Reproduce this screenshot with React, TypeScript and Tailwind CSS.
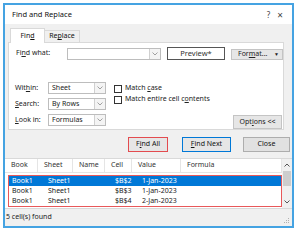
import React from "react";

const F = { fontFamily: '"Noto Sans", "Open Sans", Arial, sans-serif' };

function U({ children }: { children: React.ReactNode }) {
  return <span className="underline underline-offset-[1px] decoration-[0.5px]">{children}</span>;
}

function Arrow() {
  return (
    <svg width="6" height="4" viewBox="0 0 6 4">
      <path d="M0.5 0.5 L3 3 L5.5 0.5" fill="none" stroke="#8a8a8a" strokeWidth="0.8" />
    </svg>
  );
}

function Chevron({ up }: { up?: boolean }) {
  return (
    <svg width="6" height="4" viewBox="0 0 6 4">
      <path d={up ? "M0.5 3.5 L3 1 L5.5 3.5" : "M0.5 0.5 L3 3 L5.5 0.5"} fill="none" stroke="#555" strokeWidth="1" />
    </svg>
  );
}

function Select({ value, w }: { value: string; w: string }) {
  return (
    <div className={`${w} h-[12px] border border-[#bdbdbd] bg-white flex items-stretch`}>
      <div className="flex-1 pl-[3px] flex items-center text-[7px] text-[#222]">{value}</div>
      <div className="w-[11px] border-l border-[#d0d0d0] bg-[#f4f4f4] flex items-center justify-center">
        <Arrow />
      </div>
    </div>
  );
}

function Check({ children }: { children: React.ReactNode }) {
  return (
    <div className="flex items-center gap-[3px] h-[11px]">
      <div className="w-[8px] h-[8px] border border-[#333] bg-white" />
      <span className="text-[7px] text-[#222]">{children}</span>
    </div>
  );
}

const cols = [
  { w: "w-[33px]", label: "Book" },
  { w: "w-[35px]", label: "Sheet" },
  { w: "w-[32px]", label: "Name" },
  { w: "w-[27px]", label: "Cell" },
  { w: "w-[49px]", label: "Value" },
  { w: "flex-1", label: "Formula" },
];

const rows = [
  ["Book1", "Sheet1", "", "$B$2", "1-Jan-2023", ""],
  ["Book1", "Sheet1", "", "$B$3", "1-Jan-2023", ""],
  ["Book1", "Sheet1", "", "$B$4", "2-Jan-2023", ""],
];

export default function App() {
  return (
    <div className="w-[300px] h-[229px] bg-white pt-[3px] pl-[3px] overflow-hidden" style={F}>
      <div className="w-[291px] h-[225px] border-2 border-[#45a3e2] bg-[#f0f0f0] flex flex-col">
        {/* title bar */}
        <div className="h-[19px] bg-white flex items-center pl-[7px] shrink-0">
          <span className="text-[7.5px] text-[#111]">Find and Replace</span>
          <span className="ml-auto text-[8px] text-[#444] mr-[7px]">?</span>
          <span className="text-[10px] text-[#444] mr-[9px] leading-none">×</span>
        </div>
        {/* tabs */}
        <div className="h-[18px] flex items-end pl-[5px] shrink-0">
          <div className="w-[35px] h-[15px] bg-white border border-b-0 border-[#d9d9d9] flex items-center justify-center text-[7px] text-[#111] relative top-[1px]">
            Fin<U>d</U>
          </div>
          <div className="w-[35px] h-[12px] bg-[#f0f0f0] border border-b-0 border-l-0 border-[#d9d9d9] flex items-center justify-center text-[7px] text-[#111]">
            Re<U>p</U>lace
          </div>
        </div>
        {/* panel */}
        <div className="ml-[3px] w-[276px] h-[88px] bg-white border border-[#d9d9d9] shrink-0 flex flex-col">
          <div className="flex items-center mt-[4px] h-[13px]">
            <span className="ml-[7px] w-[51px] text-[7px] text-[#222]">Fi<U>n</U>d what:</span>
            <div className="w-[94px] h-[12px] border border-[#bdbdbd] bg-white flex justify-end">
              <div className="w-[11px] border-l border-[#d0d0d0] bg-[#f4f4f4] flex items-center justify-center">
                <Arrow />
              </div>
            </div>
            <div className="ml-[6px] w-[58px] h-[13px] border-[1.5px] border-[#555] flex items-center justify-center text-[7.5px] text-[#333]">
              Preview*
            </div>
            <div className="ml-[6px] w-[52px] h-[11px] mt-[2px] border border-[#c4c4c4] bg-[#e6e6e6] flex items-center pl-[6px] text-[7px] text-[#222]">
              For<U>m</U>at...
              <span className="ml-auto mr-[3px] text-[5px]">▼</span>
            </div>
          </div>
          <div className="flex mt-[22px]">
            <div className="flex flex-col gap-[4px]">
              {[
                [<>Wit<U>h</U>in:</>, "Sheet"],
                [<><U>S</U>earch:</>, "By Rows"],
                [<><U>L</U>ook in:</>, "Formulas"],
              ].map(([l, v], i) => (
                <div key={i} className="flex items-center">
                  <span className="ml-[6px] w-[33px] text-[7px] text-[#222]">{l}</span>
                  <Select value={v as string} w="w-[58px]" />
                </div>
              ))}
            </div>
            <div className="ml-[8px] flex flex-col mt-[1px]">
              <Check>Match <U>c</U>ase</Check>
              <Check>Match entire cell c<U>o</U>ntents</Check>
            </div>
          </div>
          <div className="flex justify-end mr-[1px] -mt-[11px]">
            <div className="w-[49px] h-[14px] border border-[#c4c4c4] bg-[#e6e6e6] flex items-center justify-center text-[7px] text-[#222]">
              Opt<U>i</U>ons &lt;&lt;
            </div>
          </div>
        </div>
        {/* buttons */}
        <div className="flex mt-[7px] h-[15px] shrink-0">
          <div className="ml-[123px] w-[40px] border border-[#e34b4f] bg-[#e6e6e6] flex items-center justify-center text-[7px] text-[#111]">
            F<U>i</U>nd All
          </div>
          <div className="ml-[14px] w-[49px] border border-[#0078d7] bg-[#e6e6e6] flex items-center justify-center text-[7px] text-[#111]">
            <U>F</U>ind Next
          </div>
          <div className="ml-[12px] w-[47px] border border-[#adadad] bg-[#e1e1e1] flex items-center justify-center text-[7px] text-[#111]">
            Close
          </div>
        </div>
        {/* table */}
        <div className="mt-[6px] h-[50px] bg-white border-t border-[#d9d9d9] flex shrink-0">
          <div className="flex-1 flex flex-col">
            <div className="h-[14px] flex border-b border-[#e5e5e5]">
              {cols.map((c, i) => (
                <div key={i} className={`${c.w} border-r border-[#e5e5e5] flex items-center pl-[6px] text-[7px] text-[#333]`}>
                  {c.label}
                </div>
              ))}
            </div>
            <div className="mt-[2px] ml-[3px] mr-[0px] border border-[#e8585a] flex flex-col">
              {rows.map((r, ri) => (
                <div key={ri} className={`h-[10px] flex ${ri === 0 ? "bg-[#0078d7] text-white" : "text-[#222]"}`}>
                  {r.map((cell, ci) => (
                    <div key={ci} className={`${cols[ci].w} ${ci === 0 ? "pl-[3px] w-[30px]" : "pl-[6px]"} flex items-center text-[7px]`}>
                      {cell}
                    </div>
                  ))}
                </div>
              ))}
            </div>
          </div>
          <div className="w-[10px] bg-[#f0f0f0] flex flex-col items-center">
            <div className="mt-[4px]"><Chevron up /></div>
            <div className="w-[8px] h-[15px] bg-[#cdcdcd] mt-[4px]" />
            <div className="mt-auto mb-[4px]"><Chevron /></div>
          </div>
        </div>
        {/* status */}
        <div className="flex-1 border-t border-[#d9d9d9] flex items-center pl-[1px] relative">
          <span className="text-[7px] text-[#222]">5 cell(s) found</span>
          <svg className="absolute right-[2px] bottom-[2px]" width="6" height="6" viewBox="0 0 6 6">
            <rect x="4" y="0" width="1" height="1" fill="#b0b0b0" />
            <rect x="2" y="2" width="1" height="1" fill="#b0b0b0" />
            <rect x="4" y="2" width="1" height="1" fill="#b0b0b0" />
            <rect x="0" y="4" width="1" height="1" fill="#b0b0b0" />
            <rect x="2" y="4" width="1" height="1" fill="#b0b0b0" />
            <rect x="4" y="4" width="1" height="1" fill="#b0b0b0" />
          </svg>
        </div>
      </div>
    </div>
  );
}
